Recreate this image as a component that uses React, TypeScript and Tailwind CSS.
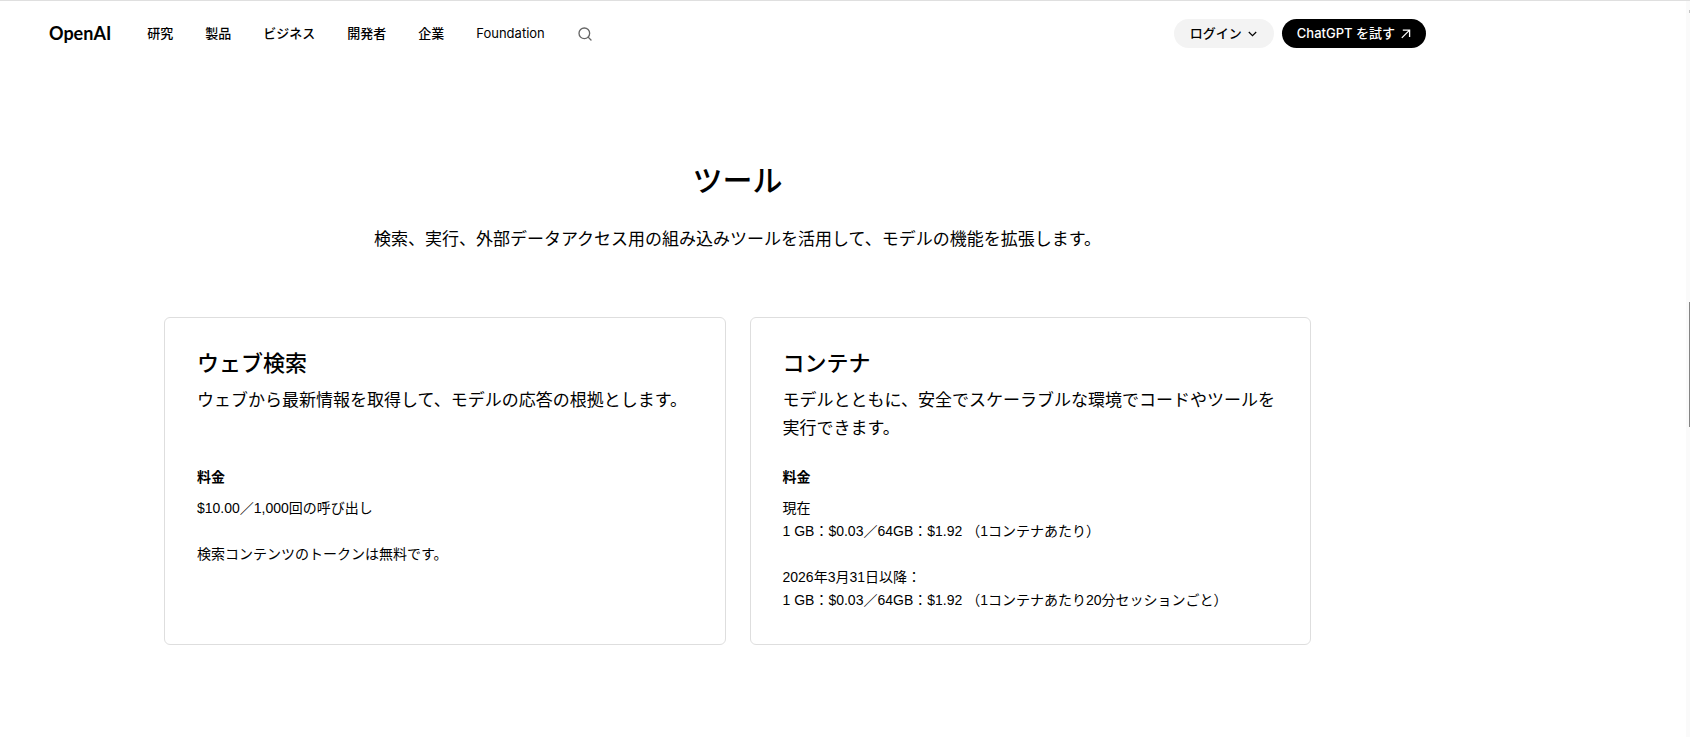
import { Search } from "lucide-react";

const navLinks = [
  { href: "#research", label: "研究" },
  { href: "#products", label: "製品" },
  { href: "#business", label: "ビジネス" },
  { href: "#developers", label: "開発者" },
  { href: "#company", label: "企業" },
  { href: "#foundation", label: "Foundation" },
];

// An empty string keeps a blank line between price groups
const tools = [
  {
    title: "ウェブ検索",
    description: "ウェブから最新情報を取得して、モデルの応答の根拠とします。",
    pricing: ["$10.00／1,000回の呼び出し", "", "検索コンテンツのトークンは無料です。"],
  },
  {
    title: "コンテナ",
    description: "モデルとともに、安全でスケーラブルな環境でコードやツールを実行できます。",
    pricing: [
      "現在",
      "1 GB：$0.03／64GB：$1.92 （1コンテナあたり）",
      "",
      "2026年3月31日以降：",
      "1 GB：$0.03／64GB：$1.92 （1コンテナあたり20分セッションごと）",
    ],
  },
];

function ChevronIcon() {
  return (
    <svg viewBox="0 0 10 10" className="h-[10px] w-[10px]" fill="none" stroke="currentColor" strokeWidth="1.2">
      <path d="M0.8 3 L4.5 6.7 L8.2 3" />
    </svg>
  );
}

function ArrowIcon() {
  return (
    <svg viewBox="0 0 10 10" className="h-[10px] w-[10px]" fill="none" stroke="currentColor" strokeWidth="1.3">
      <path d="M1.8 1.1 H8.6 V7.9 M8.6 1.1 L0.8 8.9" />
    </svg>
  );
}

function Header() {
  return (
    <header className="flex items-center justify-between px-[49px] pt-[18px]">
      <div className="flex items-center gap-9">
        <a href="#home" className="pb-[2px] font-[Lato,sans-serif] text-lg leading-6 font-bold">
          OpenAI
        </a>
        <nav className="flex items-center gap-8 text-[13px] font-medium">
          {navLinks.map(({ href, label }) => (
            <a
              key={href}
              href={href}
              className={`whitespace-nowrap hover:text-black/60 ${label === "Foundation" ? "font-normal" : ""}`}
            >
              {label}
            </a>
          ))}
          <button type="button" aria-label="検索" className="text-[#666]">
            <Search className="h-4 w-4" strokeWidth={2} />
          </button>
        </nav>
      </div>

      <div className="flex items-center gap-2 text-[13px] font-medium whitespace-nowrap">
        <button type="button" className="flex h-[29px] items-center gap-[6px] rounded-full bg-[#f3f3f3] px-4">
          ログイン
          <ChevronIcon />
        </button>
        <a href="#chatgpt" className="flex h-[29px] items-center gap-[6px] rounded-full bg-black px-[15px] text-white">
          ChatGPT を試す
          <ArrowIcon />
        </a>
      </div>
    </header>
  );
}

function ToolCard({ title, description, pricing }: (typeof tools)[number]) {
  return (
    <article className="rounded-md border border-[#dedede] p-8">
      <h3 className="text-[22px] leading-[26px] font-medium">{title}</h3>
      <p className="mt-[10px] min-h-14 text-[17px] leading-7">{description}</p>
      <div className="mt-6 font-['Liberation_Sans','Noto_Sans_CJK_JP',sans-serif] text-sm leading-[23px]">
        <h4 className="mb-2 font-bold">料金</h4>
        {pricing.map((line, i) => (
          <p key={i} className="min-h-[23px]">
            {line}
          </p>
        ))}
      </div>
    </article>
  );
}

export default function App() {
  return (
    <div
      lang="ja"
      className="flex min-h-screen border-t border-[#dfdfdf] bg-white font-[Inter,'Noto_Sans_CJK_JP',sans-serif] text-black"
    >
      <div className="flex-1 pr-[211px]">
        <Header />
        <main className="mx-auto max-w-[1147px] pt-28 pb-20">
          <h2 className="text-center text-[30px] leading-10 font-medium">ツール</h2>
          <p className="mt-[25px] text-center text-[17px] leading-7">
            検索、実行、外部データアクセス用の組み込みツールを活用して、モデルの機能を拡張します。
          </p>
          <div className="mt-16 grid grid-cols-2 gap-6">
            {tools.map((tool) => (
              <ToolCard key={tool.title} {...tool} />
            ))}
          </div>
        </main>
      </div>

      {/* Scroll track */}
      <div className="flex w-1 flex-col items-end bg-[#fafafa]">
        <div className="mt-[9px] h-[3px] w-px bg-[#c4c4c4]" />
        <div className="mt-[289px] h-[125px] w-px bg-[#858585]" />
      </div>
    </div>
  );
}
